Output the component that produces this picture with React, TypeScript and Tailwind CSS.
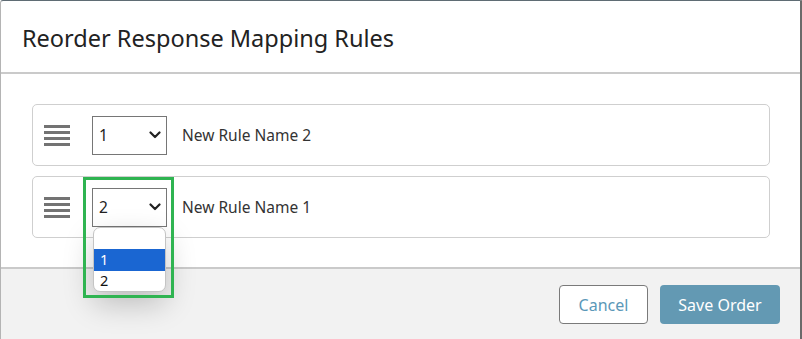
import React from "react";

const font = { fontFamily: '"Noto Sans", "Open Sans", Arial, sans-serif' };

function DragIcon() {
  return (
    <div className="flex flex-col gap-[3px] w-[26px] shrink-0">
      <div className="h-[3px] bg-[#737373]" />
      <div className="h-[3px] bg-[#737373]" />
      <div className="h-[3px] bg-[#737373]" />
      <div className="h-[3px] bg-[#737373]" />
    </div>
  );
}

function Chevron() {
  return (
    <svg width="12" height="8" viewBox="0 0 12 8" className="shrink-0">
      <path d="M1.5 1.5 L6 6 L10.5 1.5" fill="none" stroke="#222" strokeWidth="2.2" strokeLinecap="round" strokeLinejoin="round" />
    </svg>
  );
}

function Select({ value }: { value: string }) {
  return (
    <div className="w-[75px] h-[39px] border border-[#767676] bg-white flex items-center justify-between pl-[6px] pr-[5px] shrink-0 text-[15.5px] text-[#222]">
      <span className="pt-[2px]">{value}</span>
      <Chevron />
    </div>
  );
}

function Row({ value, name, open }: { value: string; name: string; open?: boolean }) {
  return (
    <div className="relative h-[62px] border border-[#cfcfcf] rounded-[5px] flex items-center pl-[11px]">
      <DragIcon />
      <div className="ml-[22px]">
        <Select value={value} />
      </div>
      <span className="ml-[15px] pt-[2px] text-[15.5px] text-[#333]">{name}</span>
      {open && (
        <>
          <div className="absolute left-[60px] top-[50px] w-[73px] h-[65px] bg-white border border-[#c4c4c4] rounded-[7px] shadow-[0_12px_30px_rgba(0,0,0,0.22)] overflow-hidden z-10 flex flex-col pt-[2px] text-[14.5px] text-[#111]">
            <div className="h-[19px]" />
            <div className="h-[22px] bg-[#1a66d2] text-white pl-[6px] flex items-center">1</div>
            <div className="h-[20px] pl-[6px] flex items-center">2</div>
          </div>
          <div className="absolute left-[50px] top-0 w-[91px] h-[121px] border-[3px] border-[#2fb451] z-20 pointer-events-none" />
        </>
      )}
    </div>
  );
}

export default function App() {
  return (
    <div style={font} className="w-[802px] h-[339px] overflow-hidden bg-white">
      <div className="w-[802px] h-[345px] border-t border-t-[#5f6c74] border-l border-l-[#b4b4b4] border-r-2 border-r-[#6a6a6a] rounded-tl-[3px] flex flex-col">
        <div className="h-[73px] shrink-0 border-b-2 border-[#cacaca] flex items-center pl-[21px] pt-[4px]">
          <h1 className="text-[23.5px] text-[#222]">Reorder Response Mapping Rules</h1>
        </div>
        <div className="h-[193px] shrink-0 pl-[31px] pr-[30px] pt-[30px] flex flex-col gap-[10px]">
          <Row value="1" name="New Rule Name 2" />
          <Row value="2" name="New Rule Name 1" open />
        </div>
        <div className="flex-1 border-t-2 border-[#cacaca] bg-[#f2f2f2] flex justify-end items-start pt-[16px] pr-[20px] gap-[12px]">
          <button className="w-[89px] h-[39px] bg-white border border-[#7a7a7a] rounded-[4px] text-[16px] text-[#5b98b8]">Cancel</button>
          <button className="w-[120px] h-[39px] bg-[#6399b3] rounded-[4px] text-[16px] text-white">Save Order</button>
        </div>
      </div>
    </div>
  );
}
